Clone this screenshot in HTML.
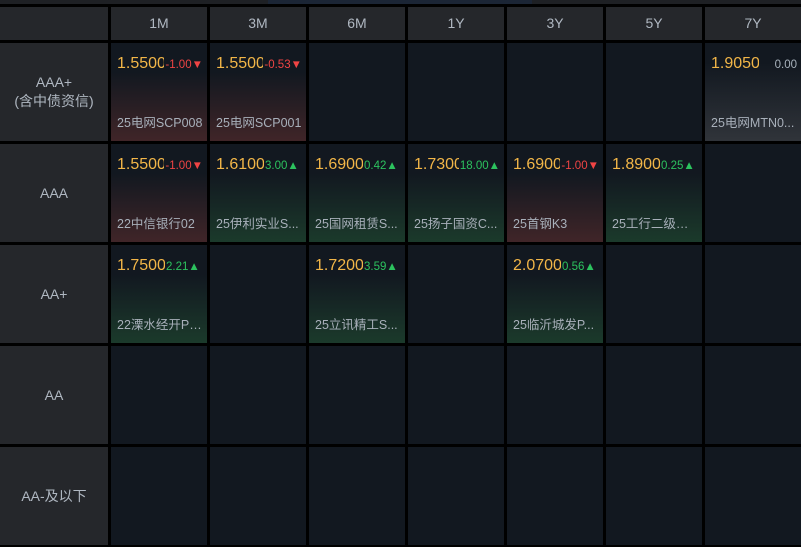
<!DOCTYPE html><html><head><meta charset="utf-8"><style>
body{margin:0;width:801px;height:547px;background:#000;overflow:hidden;font-family:"Liberation Sans","Noto Sans CJK SC",sans-serif;position:relative}
.top{position:absolute;left:0;top:0;width:801px;height:4px;background:#1e2024}
.top i{position:absolute;left:268px;width:264px;height:4px;background:#1b2535}
.g{position:absolute;top:7px;left:0;display:grid;grid-template-columns:108px repeat(7,96px);grid-template-rows:33px repeat(5,98px);gap:3px}
.h{background:#25272b;color:#b0b8c2;font-size:14px;display:flex;align-items:center;justify-content:center;text-align:center;line-height:19px}
.c{background:#121820;position:relative;overflow:hidden}
.r{background:linear-gradient(#121820 30%,#402528)}
.gr{background:linear-gradient(#121820 30%,#1b3a2b)}
.gy{background:linear-gradient(#121820 20%,#30343a)}
.t{position:absolute;left:6px;right:4px;top:12px;display:flex;align-items:baseline;white-space:nowrap}
.p{font-size:16px;color:#f2b648;overflow:hidden;flex:0 1 auto;min-width:0;max-width:48px}
.d{font-size:11.5px;flex:0 0 auto;margin-left:1px}
.dr{color:#f04444}.dg{color:#2cc25e}.dn{color:#a8b2bc;margin-left:auto}
.n{position:absolute;left:6px;top:69px;font-size:12.5px;color:#a8b0ba;white-space:nowrap;width:86px;overflow:hidden;text-overflow:ellipsis}
</style></head><body><div class="top"><i></i></div>
<div class="g">
<div class="h"></div><div class="h">1M</div><div class="h">3M</div><div class="h">6M</div><div class="h">1Y</div><div class="h">3Y</div><div class="h">5Y</div><div class="h">7Y</div>
<div class="h">AAA+<br>(含中债资信)</div>
<div class="c r"><div class="t"><span class="p">1.5500</span><span class="d dr">-1.00▼</span></div><div class="n">25电网SCP008</div></div>
<div class="c r"><div class="t"><span class="p">1.5500</span><span class="d dr">-0.53▼</span></div><div class="n">25电网SCP001</div></div>
<div class="c"></div><div class="c"></div><div class="c"></div><div class="c"></div>
<div class="c gy"><div class="t"><span class="p">1.9050</span><span class="d dn">0.00</span></div><div class="n">25电网MTN0...</div></div>
<div class="h">AAA</div>
<div class="c r"><div class="t"><span class="p">1.5500</span><span class="d dr">-1.00▼</span></div><div class="n">22中信银行02</div></div>
<div class="c gr"><div class="t"><span class="p">1.6100</span><span class="d dg">3.00▲</span></div><div class="n">25伊利实业S...</div></div>
<div class="c gr"><div class="t"><span class="p">1.6900</span><span class="d dg">0.42▲</span></div><div class="n">25国网租赁S...</div></div>
<div class="c gr"><div class="t"><span class="p">1.7300</span><span class="d dg">18.00▲</span></div><div class="n">25扬子国资C...</div></div>
<div class="c r"><div class="t"><span class="p">1.6900</span><span class="d dr">-1.00▼</span></div><div class="n">25首钢K3</div></div>
<div class="c gr"><div class="t"><span class="p">1.8900</span><span class="d dg">0.25▲</span></div><div class="n">25工行二级资...</div></div>
<div class="c"></div>
<div class="h">AA+</div>
<div class="c gr"><div class="t"><span class="p">1.7500</span><span class="d dg">2.21▲</span></div><div class="n">22溧水经开PP...</div></div>
<div class="c"></div>
<div class="c gr"><div class="t"><span class="p">1.7200</span><span class="d dg">3.59▲</span></div><div class="n">25立讯精工S...</div></div>
<div class="c"></div>
<div class="c gr"><div class="t"><span class="p">2.0700</span><span class="d dg">0.56▲</span></div><div class="n">25临沂城发P...</div></div>
<div class="c"></div><div class="c"></div>
<div class="h">AA</div><div class="c"></div><div class="c"></div><div class="c"></div><div class="c"></div><div class="c"></div><div class="c"></div><div class="c"></div>
<div class="h">AA-及以下</div><div class="c"></div><div class="c"></div><div class="c"></div><div class="c"></div><div class="c"></div><div class="c"></div><div class="c"></div>
</div></body></html>
